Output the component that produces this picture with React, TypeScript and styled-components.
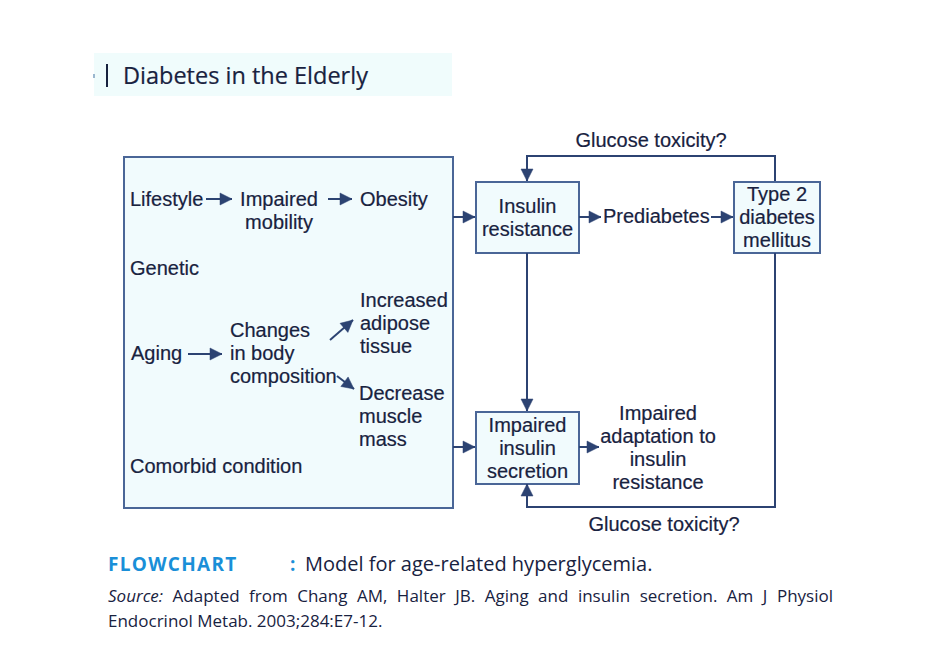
import React from 'react';
import styled, { createGlobalStyle } from 'styled-components';

const GlobalStyle = createGlobalStyle`
  html, body {
    margin: 0;
    padding: 0;
    background: #ffffff;
  }
  body {
    font-family: "Open Sans", "Noto Sans", sans-serif;
  }
`;

const INK = '#18223f';
const LINE = '#2c4372';
const EDGE = '#4a6697';

const Page = styled.div`
  width: 926px;
  height: 667px;
  padding-top: 53px;
  box-sizing: border-box;
  overflow: hidden;
`;

const TitleStrip = styled.div`
  position: relative;
  margin-left: 94px;
  width: 358px;
  height: 43px;
  background: #f0fcfc;
  display: flex;
  align-items: center;
  gap: 15px;
  padding-left: 12px;
  box-sizing: border-box;
`;

const TitleTick = styled.span`
  position: absolute;
  left: -1px;
  top: 21px;
  width: 2px;
  height: 4px;
  background: #9bb7cf;
`;

const TitleBar = styled.span`
  width: 2px;
  height: 23px;
  margin-top: 2px;
  background: ${INK};
`;

const TitleText = styled.h1`
  margin: 0;
  font-family: "Open Sans", "Noto Sans", sans-serif;
  font-weight: 400;
  font-size: 23.5px;
  color: ${INK};
  -webkit-text-stroke: 0.2px ${INK};
`;

const Canvas = styled.div`
  position: relative;
  width: 926px;
  height: 420px;
  margin-top: 24px;
  font-family: "Liberation Sans", Arial, sans-serif;
  font-size: 20px;
  line-height: 23px;
  color: ${INK};
  -webkit-text-stroke: 0.2px ${INK};
`;

const Wires = styled.svg`
  position: absolute;
  left: 0;
  top: 0;
`;

const Panel = styled.div<{ $x: number; $y: number; $w: number; $h: number }>`
  position: absolute;
  left: ${p => p.$x}px;
  top: ${p => p.$y}px;
  width: ${p => p.$w}px;
  height: ${p => p.$h}px;
  border: 2px solid ${EDGE};
  background: #f1fbfd;
  box-sizing: border-box;
`;

const Box = styled(Panel)`
  display: flex;
  flex-direction: column;
  align-items: center;
  justify-content: center;
  text-align: center;
`;

const Label = styled.div<{ $x: number; $y: number; $center?: boolean }>`
  position: absolute;
  left: ${p => p.$x}px;
  top: ${p => p.$y}px;
  white-space: nowrap;
  text-align: ${p => (p.$center ? 'center' : 'left')};
  transform: ${p => (p.$center ? 'translateX(-50%)' : 'none')};
`;

const Caption = styled.div`
  margin-top: 11px;
  margin-left: 108px;
  width: 725px;
  color: ${INK};
`;

const CaptionTitle = styled.div`
  display: flex;
  align-items: baseline;
  font-size: 20px;
  line-height: 26px;
`;

const Tag = styled.span`
  width: 182px;
  font-size: 19px;
  font-weight: 700;
  color: #1a8fd8;
  letter-spacing: 1.3px;
`;

const Colon = styled.span`
  width: 15px;
  font-size: 19px;
  font-weight: 700;
  color: #1a8fd8;
`;

const Source = styled.div`
  margin-top: 6px;
  display: flex;
  flex-direction: column;
  font-size: 17px;
  line-height: 25px;
`;

const SourceLine = styled.span<{ $justify?: boolean }>`
  text-align: ${p => (p.$justify ? 'justify' : 'left')};
  text-align-last: ${p => (p.$justify ? 'justify' : 'left')};
  white-space: ${p => (p.$justify ? 'normal' : 'nowrap')};
`;

type Pt = [number, number];

const arrowHead = (from: Pt, to: Pt, len = 12, half = 6) => {
  const dx = to[0] - from[0];
  const dy = to[1] - from[1];
  const d = Math.hypot(dx, dy);
  const ux = dx / d;
  const uy = dy / d;
  const bx = to[0] - ux * len;
  const by = to[1] - uy * len;
  return `${to[0]},${to[1]} ${bx - uy * half},${by + ux * half} ${bx + uy * half},${by - ux * half}`;
};

// polylines, the last segment ends in an arrowhead
const arrows: Pt[][] = [
  [[206, 79], [232, 79]],
  [[328, 79], [352, 79]],
  [[188, 234], [222, 234]],
  [[330, 220], [353, 200]],
  [[337, 256], [354, 269]],
  [[453, 97], [475, 97]],
  [[453, 327], [475, 327]],
  [[579, 97], [601, 97]],
  [[711, 97], [733, 97]],
  [[579, 327], [599, 327]],
  [[527, 133], [527, 291]],
  [[775, 61], [775, 36], [527, 36], [527, 61]],
  [[775, 133], [775, 387], [527, 387], [527, 364]],
];

const App = () => (
  <Page>
    <GlobalStyle />
    <TitleStrip>
      <TitleTick />
      <TitleBar />
      <TitleText>Diabetes in the Elderly</TitleText>
    </TitleStrip>

    <Canvas>
      <Panel $x={123} $y={36} $w={331} $h={353} />
      <Box $x={475} $y={61} $w={105} $h={73}>
        <span>Insulin</span>
        <span>resistance</span>
      </Box>
      <Box $x={733} $y={61} $w={88} $h={73}>
        <span>Type 2</span>
        <span>diabetes</span>
        <span>mellitus</span>
      </Box>
      <Box $x={475} $y={291} $w={105} $h={74}>
        <span>Impaired</span>
        <span>insulin</span>
        <span>secretion</span>
      </Box>

      <Wires width={926} height={420}>
        {arrows.map((pts, i) => {
          const n = pts.length;
          return (
            <g key={i} fill={LINE} stroke={LINE}>
              <polyline
                points={pts.map(p => p.join(',')).join(' ')}
                fill="none"
                strokeWidth={2}
              />
              <polygon points={arrowHead(pts[n - 2], pts[n - 1])} strokeWidth={0.5} />
            </g>
          );
        })}
      </Wires>

      <Label $x={130} $y={68}>Lifestyle</Label>
      <Label $x={279} $y={68} $center>
        Impaired
        <br />
        mobility
      </Label>
      <Label $x={360} $y={68}>Obesity</Label>
      <Label $x={130} $y={137}>Genetic</Label>
      <Label $x={360} $y={169}>
        Increased
        <br />
        adipose
        <br />
        tissue
      </Label>
      <Label $x={230} $y={199}>
        Changes
        <br />
        in body
        <br />
        composition
      </Label>
      <Label $x={131} $y={222}>Aging</Label>
      <Label $x={359} $y={262}>
        Decrease
        <br />
        muscle
        <br />
        mass
      </Label>
      <Label $x={130} $y={335}>Comorbid condition</Label>

      <Label $x={651} $y={9} $center>Glucose toxicity?</Label>
      <Label $x={603} $y={85}>Prediabetes</Label>
      <Label $x={658} $y={282} $center>
        Impaired
        <br />
        adaptation to
        <br />
        insulin
        <br />
        resistance
      </Label>
      <Label $x={664} $y={393} $center>Glucose toxicity?</Label>
    </Canvas>

    <Caption>
      <CaptionTitle>
        <Tag>FLOWCHART</Tag>
        <Colon>:</Colon>
        <span>Model for age-related hyperglycemia.</span>
      </CaptionTitle>
      <Source>
        <SourceLine $justify>
          <i>Source:</i> Adapted from Chang AM, Halter JB. Aging and insulin secretion. Am J Physiol
        </SourceLine>
        <SourceLine>Endocrinol Metab. 2003;284:E7-12.</SourceLine>
      </Source>
    </Caption>
  </Page>
);

export default App;
